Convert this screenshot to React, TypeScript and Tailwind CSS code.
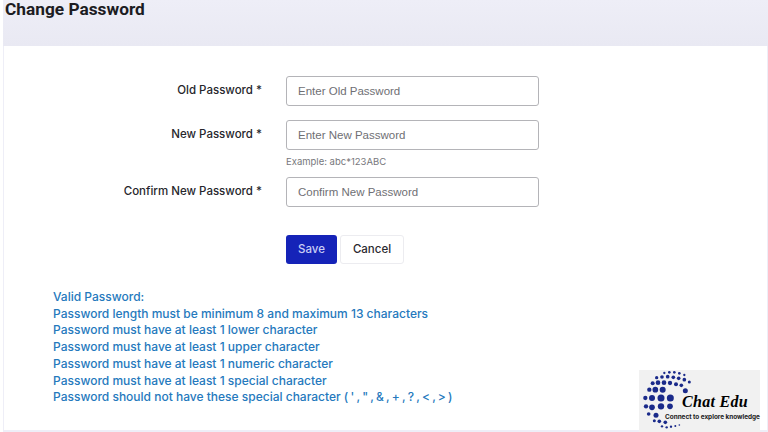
const dots: [number, number, number][] = [
  [85,15,3.5],[100,13,4],[115,13,4],[130,16,4],[145,21,3.5],
  [62,29,5],[78,27,5.5],[95,26,5.5],[112,28,5.5],[128,31,5.5],[145,35,5.5],[160,42,4.5],
  [50,46,6],[66,44,7],[84,44,7],[102,45,6.5],[120,49,6],[136,52,5.5],
  [40,65,6.5],[58,65,8.5],[80,65,9],[148,68,7.5],
  [28,90,6.5],[48,90,9],[75,90,10.5],[103,90,10.5],
  [30,115,6.5],[48,118,8.5],[75,115,9.5],[102,115,8.5],
  [38,138,5.5],[60,142,7.5],
  [55,158,4.5],[70,160,5.5],[88,163,5.5],
  [78,175,3.5],[92,178,3.5],[105,176,3.5],[118,174,3],[130,171,2.5],
];

const fields = [
  { label: "Old Password *", placeholder: "Enter Old Password" },
  { label: "New Password *", placeholder: "Enter New Password", hint: "Example: abc*123ABC" },
  { label: "Confirm New Password *", placeholder: "Confirm New Password" },
];

const rules = [
  "Valid Password:",
  "Password length must be minimum 8 and maximum 13 characters",
  "Password must have at least 1 lower character",
  "Password must have at least 1 upper character",
  "Password must have at least 1 numeric character",
  "Password must have at least 1 special character",
];

export default function App() {
  return (
    <div className="relative h-[432px] w-[768px] overflow-hidden bg-white font-['Inter',sans-serif]">
      <div className="ml-[3px] flex h-[432px] flex-col bg-[#eeeef7] pb-[2px]">
        <div className="h-[46px] shrink-0 bg-gradient-to-b from-[#eeeef7] to-[#e9e9f3]">
          <h1 className="ml-[2px] text-[17.3px] font-bold leading-[18px] text-[#1c1c22] font-['Roboto',sans-serif]">Change Password</h1>
        </div>
        <div className="ml-px mr-px flex-1 bg-white pt-[30px]">
          <div className="flex flex-col">
            {fields.map((f) => (
              <div key={f.label} className="mb-[14px] flex items-start">
                <label className="w-[258px] shrink-0 pt-[5px] text-right text-[11.5px] font-medium leading-[18px] text-[#26262c]">{f.label}</label>
                <div className="ml-[24px]">
                  <input
                    readOnly
                    placeholder={f.placeholder}
                    className="block h-[30px] w-[253px] rounded-[3px] border border-[#b4b4b8] bg-white px-[11px] font-['Liberation_Sans',sans-serif] text-[11.5px] text-[#555] placeholder:text-[#6f6f74]"
                  />
                  {f.hint && <p className="-mb-[5px] mt-[6px] text-[9.5px] leading-[12px] text-[#77777c]">{f.hint}</p>}
                </div>
              </div>
            ))}
          </div>
          <div className="ml-[282px] mt-[14px] flex gap-[3px]">
            <button className="h-[29px] w-[51px] rounded-[3px] bg-[#1523b8] text-[11.5px] font-medium text-[#c9cdf5]">Save</button>
            <button className="h-[29px] w-[64px] rounded-[3px] border border-[#ececf0] bg-white text-[11.5px] font-medium text-[#2a2a30]">Cancel</button>
          </div>
          <div className="ml-[49px] mt-[25px] flex flex-col">
            {rules.map((r) => (
              <p key={r} className="text-[12px] font-medium leading-[16.7px] text-[#2579bd]">{r}</p>
            ))}
            <p className="text-[12px] font-medium leading-[16.7px] text-[#2579bd]">
              Password should not have these special character{" "}
              <span className="tracking-[-0.5px]">( ' , " , &amp; , + , ? , &lt; , &gt; )</span>
            </p>
          </div>
        </div>
      </div>
      <div className="absolute left-[639px] top-[370px] h-[62px] w-[121px] bg-[#f1f1f1]">
        <svg viewBox="0 0 198 192" className="absolute -left-[3px] -top-[2px] h-[64px] w-[66px]">
          {dots.map(([x, y, r], i) => (
            <circle key={i} cx={x} cy={y} r={r} fill="#1a2a8a" />
          ))}
        </svg>
        <span className="absolute left-[43px] top-[22px] font-['Liberation_Serif',serif] text-[16px] font-bold italic leading-[20px] tracking-[0.3px] text-black">Chat Edu</span>
        <span className="absolute left-[26px] top-[42px] whitespace-nowrap text-[6.4px] font-bold leading-[10px] text-[#1a1a1a]">Connect to explore knowledge</span>
      </div>
    </div>
  );
}
